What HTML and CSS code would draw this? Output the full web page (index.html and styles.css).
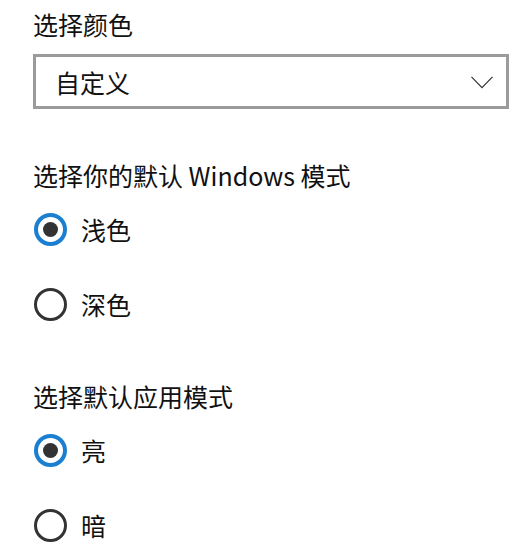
FILE: index.html
```html
<!DOCTYPE html>
<html lang="zh-CN">
<head>
<meta charset="utf-8">
<title>颜色</title>
<link rel="stylesheet" href="styles.css">
</head>
<body>
<main class="settings">
  <section class="section">
    <h2 class="section-title">选择颜色</h2>
    <div class="select">
      <span class="select-value">自定义</span>
      <svg class="select-chevron" width="22" height="13" viewBox="0 0 22 13" aria-hidden="true">
        <path d="M0.5 0.8 L11 11.6 L21.5 0.8" fill="none" stroke="#333" stroke-width="1.2"/>
      </svg>
    </div>
  </section>

  <section class="section">
    <h2 class="section-title">选择你的默认 Windows 模式</h2>
    <div class="radio-group">
      <label class="radio"><span class="radio-mark is-checked"></span><span class="radio-label">浅色</span></label>
      <label class="radio"><span class="radio-mark"></span><span class="radio-label">深色</span></label>
    </div>
  </section>

  <section class="section">
    <h2 class="section-title">选择默认应用模式</h2>
    <div class="radio-group">
      <label class="radio"><span class="radio-mark is-checked"></span><span class="radio-label">亮</span></label>
      <label class="radio"><span class="radio-mark"></span><span class="radio-label">暗</span></label>
    </div>
  </section>
</main>
</body>
</html>
```

FILE: styles.css
```css
html, body {
  margin: 0;
  padding: 0;
  background: #ffffff;
}

body {
  font-family: "Noto Sans CJK SC", "Noto Sans", sans-serif;
  color: #111111;
  font-size: 25px;
}

.settings {
  display: flex;
  flex-direction: column;
  gap: 48px;
  padding: 6px 23px 0 33px;
}

.section {
  display: flex;
  flex-direction: column;
}

.section-title {
  margin: 0;
  font-size: 25px;
  font-weight: 400;
  line-height: 36px;
}

/* drop-down box */
.select {
  margin-top: 12px;
  height: 55px;
  box-sizing: border-box;
  border: 3px solid #9b9b9b;
  display: flex;
  align-items: center;
  justify-content: space-between;
  padding: 0 13px 0 19px;
}

.select-value {
  line-height: 36px;
}

.select-chevron {
  display: block;
  margin-top: 2px;
}

/* radio buttons */
.radio-group {
  margin-top: 16px;
  display: flex;
  flex-direction: column;
  gap: 35px;
  padding-bottom: 6px;
}

.radio {
  display: flex;
  align-items: center;
  gap: 14px;
  height: 40px;
  padding-left: 1px;
}

.radio-mark {
  width: 33px;
  height: 33px;
  box-sizing: border-box;
  border-radius: 50%;
  border: 3px solid #333333;
  display: flex;
  align-items: center;
  justify-content: center;
}

.radio-mark.is-checked {
  border: 4px solid #1b7fd1;
}

.radio-mark.is-checked::after {
  content: "";
  width: 15px;
  height: 15px;
  border-radius: 50%;
  background: #333333;
}

.radio-label {
  line-height: 36px;
}
```
